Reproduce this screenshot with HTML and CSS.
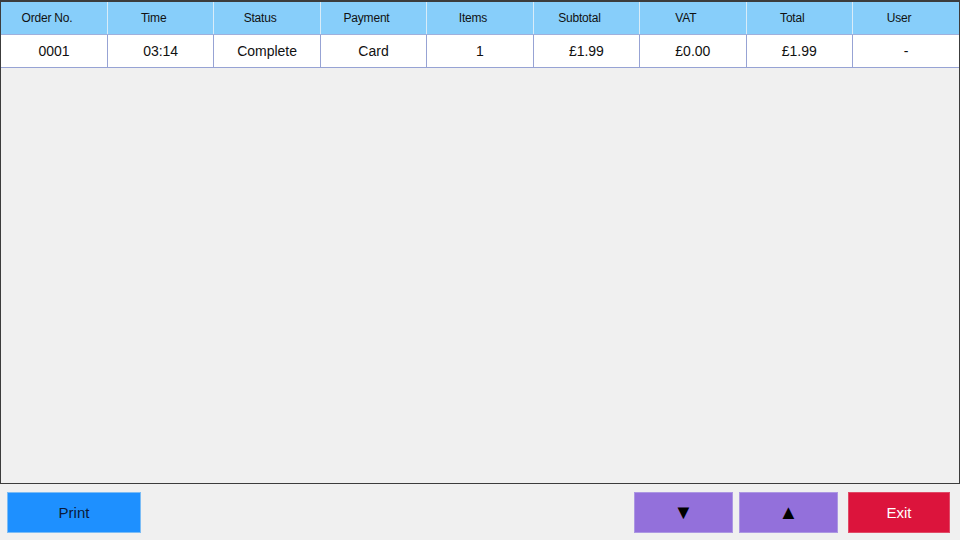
FILE: index.html
```html
<!DOCTYPE html>
<html lang="en">
<head>
  <meta charset="UTF-8">
  <title>Orders</title>
  <link rel="stylesheet" href="styles.css">
</head>
<body>

  <div class="panel">
    <table class="orders">
      <tr>
        <th>Order No.</th>
        <th>Time</th>
        <th>Status</th>
        <th>Payment</th>
        <th>Items</th>
        <th>Subtotal</th>
        <th>VAT</th>
        <th>Total</th>
        <th>User</th>
      </tr>
      <tr>
        <td>0001</td>
        <td>03:14</td>
        <td>Complete</td>
        <td>Card</td>
        <td>1</td>
        <td>£1.99</td>
        <td>£0.00</td>
        <td>£1.99</td>
        <td>-</td>
      </tr>
    </table>
  </div>

  <div class="footer">
    <button class="btn print">Print</button>
    <div class="spacer"></div>
    <button class="btn nav">&#9660;</button>
    <button class="btn nav up">&#9650;</button>
    <button class="btn exit">Exit</button>
  </div>

</body>
</html>
```

FILE: styles.css
```css
body {
  margin: 0;
  background-color: #f0f0f0;
  font-family: "Liberation Sans", Arial, sans-serif;
}
.panel {
  height: 481px;
  border: 1px solid #3c3c3c;
  border-top-width: 2px;
  background-color: #f0f0f0;
}
.orders {
  width: 100%;
  border-collapse: collapse;
  table-layout: fixed;
}
.orders th {
  height: 32px;
  padding: 0 14px 0 0;
  background-color: #87cefa;
  font-size: 12px;
  font-weight: normal;
  letter-spacing: -0.2px;
  color: #111;
  border-left: 1px solid #d8ecf8;
  border-bottom: 1px solid #9fb0dc;
}
.orders td {
  height: 32px;
  padding: 0;
  background-color: white;
  font-size: 14px;
  color: #111;
  text-align: center;
  border-left: 1px solid #97a3d4;
  border-bottom: 1px solid #97a3d4;
}
.orders th:first-child,
.orders td:first-child {
  border-left: none;
}
.footer {
  display: flex;
  padding: 8px 10px 0 7px;
}
.spacer {
  flex: 1;
}
.btn {
  height: 41px;
  border: 1px solid transparent;
  font-family: "Liberation Sans", Arial, sans-serif;
  font-size: 15px;
  padding: 0;
}
.print {
  width: 134px;
  background-color: #1e90ff;
  border-color: #7bbcf5;
  color: #0a1a3a;
}
.nav {
  width: 99px;
  background-color: #9370db;
  border-color: #ac97e3;
  color: black;
  font-size: 20px;
}
.up {
  margin-left: 6px;
}
.exit {
  width: 102px;
  margin-left: 10px;
  background-color: #dc143c;
  border-color: #e04a66;
  color: white;
}
```
